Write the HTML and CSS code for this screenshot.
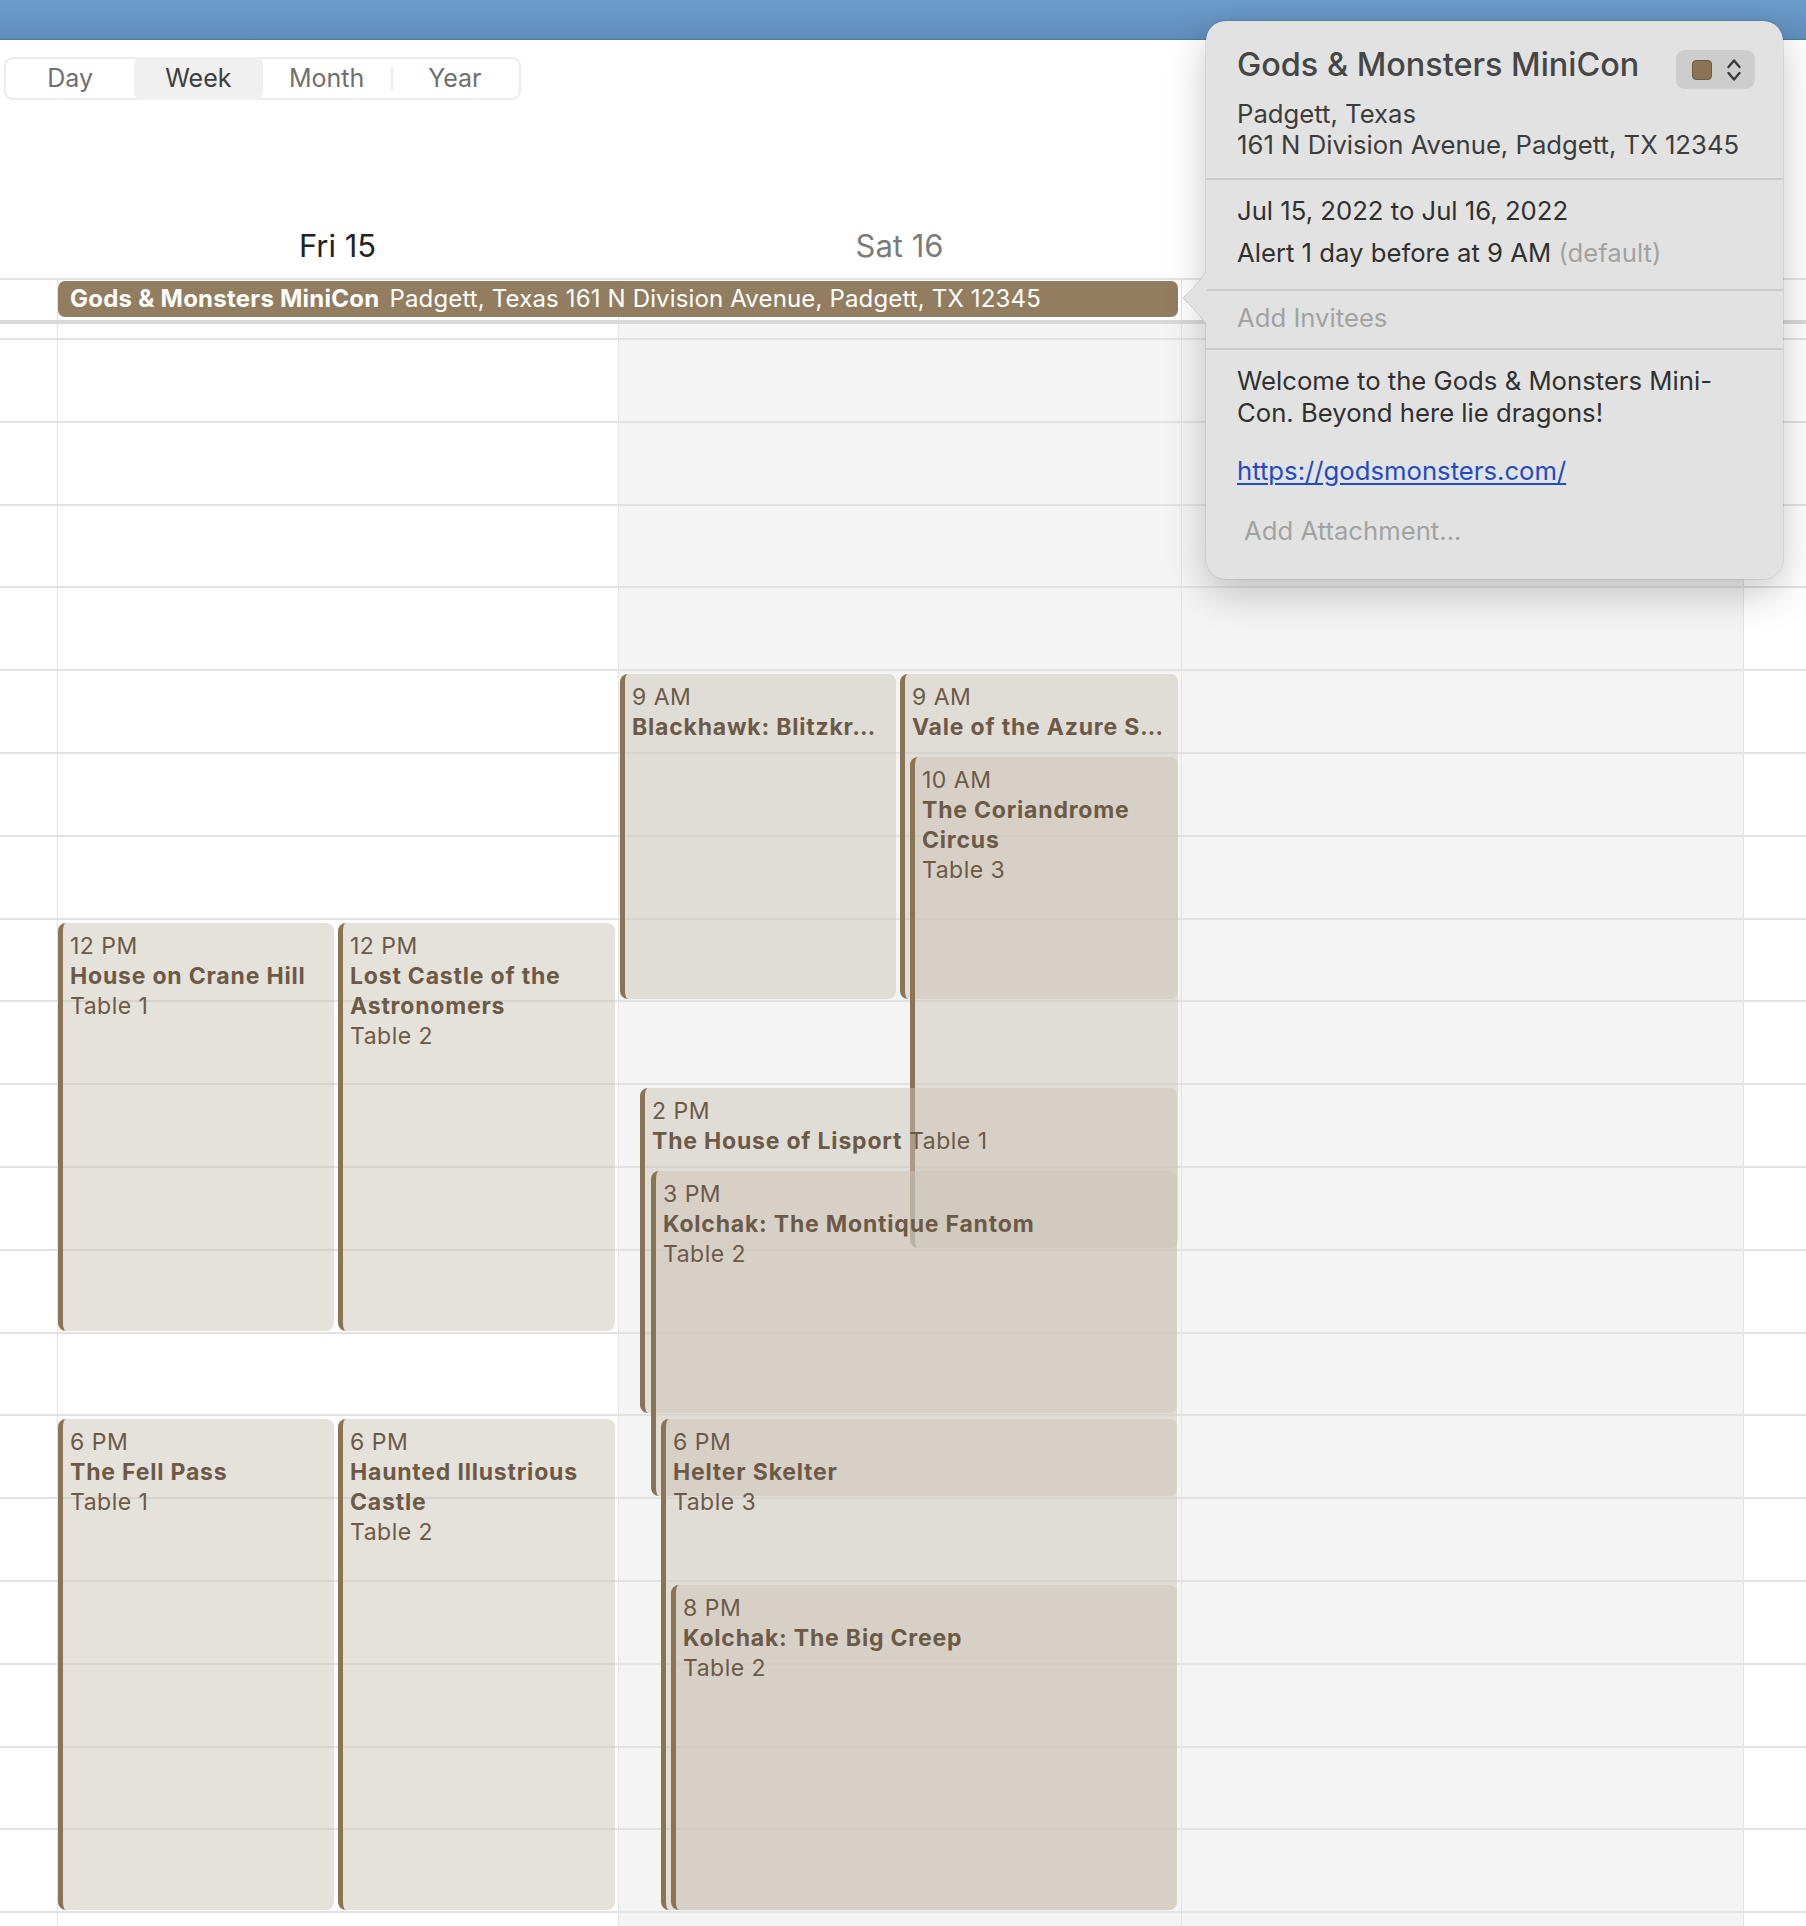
FILE: index.html
```html
<!DOCTYPE html>
<html>
<head>
<meta charset="utf-8">
<link rel="stylesheet" href="styles.css">
</head>
<body>
<div class="titlebar"></div>
<div class="toolbar">
  <div class="seg">
    <div class="seg-item">Day</div>
    <div class="seg-item active">Week</div>
    <div class="seg-item">Month</div>
    <div class="seg-item sep">Year</div>
  </div>
</div>
<div class="dayheads">
  <div></div>
  <div class="dh">Fri 15</div>
  <div class="dh dim">Sat 16</div>
  <div></div>
  <div></div>
</div>
<div class="allday">
  <div class="ad-cell ad-c1"></div>
  <div class="ad-cell ad-c2"></div>
  <div class="ad-cell ad-c3"></div>
  <div class="ad-cell ad-c4"></div>
  <div class="ad-cell ad-c5"></div>
  <div class="ad-event"><span class="ad-title">Gods &amp; Monsters MiniCon</span><span class="ad-loc">Padgett, Texas 161 N Division Avenue, Padgett, TX 12345</span></div>
</div>
<div class="divider"></div>
<div class="grid">
  <div class="gutter"></div>
  <div class="col">
    <div class="ev" style="top:598.6px;height:408px;left:0px;width:276px">
      <div>12 PM</div><div class="ev-title">House on Crane Hill</div><div>Table 1</div>
    </div>
    <div class="ev" style="top:598.6px;height:408px;left:280px;width:277px">
      <div>12 PM</div><div class="ev-title">Lost Castle of the<br>Astronomers</div><div>Table 2</div>
    </div>
    <div class="ev" style="top:1095.4px;height:491px;left:0px;width:276px">
      <div>6 PM</div><div class="ev-title">The Fell Pass</div><div>Table 1</div>
    </div>
    <div class="ev" style="top:1095.4px;height:491px;left:280px;width:277px">
      <div>6 PM</div><div class="ev-title">Haunted Illustrious<br>Castle</div><div>Table 2</div>
    </div>
  </div>
  <div class="col weekend">
    <div class="ev" style="top:350.2px;height:325px;left:1px;width:276px">
      <div>9 AM</div><div class="ev-title">Blackhawk: Blitzkr…</div>
    </div>
    <div class="ev" style="top:350.2px;height:325px;left:281px;width:278px">
      <div>9 AM</div><div class="ev-title">Vale of the Azure S…</div>
    </div>
    <div class="ev" style="top:433px;height:491px;left:291px;width:268px">
      <div>10 AM</div><div class="ev-title">The Coriandrome<br>Circus</div><div>Table 3</div>
    </div>
    <div class="ev" style="top:764.2px;height:325px;left:21px;width:537px">
      <div>2 PM</div><div><span class="ev-title">The House of Lisport</span> Table 1</div>
    </div>
    <div class="ev" style="top:847px;height:325px;left:32px;width:526px">
      <div>3 PM</div><div class="ev-title">Kolchak: The Montique Fantom</div><div>Table 2</div>
    </div>
    <div class="ev" style="top:1095.4px;height:491px;left:42px;width:516px">
      <div>6 PM</div><div class="ev-title">Helter Skelter</div><div>Table 3</div>
    </div>
    <div class="ev" style="top:1261px;height:325px;left:52px;width:506px">
      <div>8 PM</div><div class="ev-title">Kolchak: The Big Creep</div><div>Table 2</div>
    </div>
  </div>
  <div class="col weekend"></div>
  <div class="col"></div>
</div>

<div class="popover">
  <svg class="pop-arrow" width="25" height="56" viewBox="0 0 25 56">
    <path d="M25 0 C21 10 9 21 1 28 C9 35 21 46 25 56 Z" fill="#e2e2e2"/>
    <path d="M24 0 C20 10 8 21 1 28 C8 35 20 46 24 56" fill="none" stroke="#c9c9c9" stroke-width="1"/>
  </svg>
  <div class="pop-sec pop-head">
    <div class="pop-title-row">
      <div class="pop-title">Gods &amp; Monsters MiniCon</div>
      <div class="swatch-btn">
        <span class="swatch"></span>
        <svg class="chev" width="16" height="26" viewBox="0 0 16 26">
          <path d="M2.5 10 L8 3.5 L13.5 10" fill="none" stroke="#3a3a3a" stroke-width="2.4" stroke-linecap="round" stroke-linejoin="round"/>
          <path d="M2.5 16 L8 22.5 L13.5 16" fill="none" stroke="#3a3a3a" stroke-width="2.4" stroke-linecap="round" stroke-linejoin="round"/>
        </svg>
      </div>
    </div>
    <div class="pop-loc">Padgett, Texas<br>161 N Division Avenue, Padgett, TX 12345</div>
  </div>
  <div class="pop-sec pop-dates">
    <div class="pop-line">Jul 15, 2022 to Jul 16, 2022</div>
    <div class="pop-line">Alert 1 day before at 9 AM <span class="muted">(default)</span></div>
  </div>
  <div class="pop-sec pop-inv">
    <div class="pop-line muted">Add Invitees</div>
  </div>
  <div class="pop-sec pop-notes">
    <div class="pop-note">Welcome to the Gods &amp; Monsters Mini-<br>Con. Beyond here lie dragons!</div>
    <div class="pop-link-row"><a class="pop-link" href="#">https://godsmonsters.com/</a></div>
    <div class="pop-attach">Add Attachment...</div>
  </div>
</div>
</body>
</html>
```
FILE: styles.css
```css
* { box-sizing: border-box; }

body {
  margin: 0;
  width: 1806px;
  height: 1926px;
  overflow: hidden;
  background: #ffffff;
  font-family: Inter, "Noto Sans", "Liberation Sans", sans-serif;
  position: relative;
}

.titlebar {
  height: 40px;
  background: linear-gradient(#6b9dcd, #5f8dbb);
  border-bottom: 1px solid #50799f;
}

.toolbar {
  height: 60px;
  padding: 17px 0 0 4px;
}

.seg {
  display: flex;
  width: 517px;
  height: 43px;
  border: 2px solid #ececec;
  border-radius: 9px;
  background: #fff;
}

.seg-item {
  flex: 1;
  display: flex;
  align-items: center;
  justify-content: center;
  font-size: 25px;
  color: #6f6f6f;
  position: relative;
  padding-bottom: 1px;
}

.seg-item.active {
  background: #f0f0f0;
  color: #3e3e3e;
  border-radius: 8px;
  margin: -2px 0;
}

.seg-item.sep::before {
  content: "";
  position: absolute;
  left: 0;
  top: 8px;
  bottom: 8px;
  width: 2px;
  background: #ebebeb;
}

.dayheads {
  display: grid;
  grid-template-columns: 57px 561px 563px 562px 1fr;
  height: 178px;
  align-items: end;
  padding-bottom: 14px;
}

.dh {
  text-align: center;
  font-size: 31px;
  line-height: 36px;
  color: #222222;
}

.dh.dim { color: #7b7b7b; }

.allday {
  display: grid;
  grid-template-columns: 57px 561px 563px 562px 1fr;
  height: 42px;
  border-top: 2px solid #e4e4e4;
}

.ad-cell { grid-row: 1; border-left: 1px solid #e4e4e4; }
.ad-c1 { grid-column: 1; border-left: none; }
.ad-c2 { grid-column: 2; }
.ad-c3 { grid-column: 3; }
.ad-c4 { grid-column: 4; }
.ad-c5 { grid-column: 5; }

.ad-event {
  grid-row: 1;
  grid-column: 2 / 4;
  margin: 1px 3px 3px 1px;
  height: 36px;
  background: #937d61;
  border-radius: 7px;
  color: #ffffff;
  font-size: 24px;
  letter-spacing: 0.15px;
  line-height: 36px;
  padding-left: 12px;
  white-space: nowrap;
  overflow: hidden;
  z-index: 1;
}

.ad-title { font-weight: 700; margin-right: 10px; letter-spacing: 0.25px; }

.divider {
  height: 4px;
  background: #d9d9d9;
}

.grid {
  display: grid;
  grid-template-columns: 57px 561px 563px 562px 1fr;
  height: 1602px;
}

.gutter,
.col {
  background-image: repeating-linear-gradient(to bottom, #e2e2e2 0, #e2e2e2 2px, transparent 2px, transparent 82.8px);
  background-position: 0 14px;
}

.col {
  position: relative;
  border-left: 1px solid #e3e3e3;
}

.col.weekend { background-color: #f4f4f4; }

.ev {
  position: absolute;
  border-left: 5px solid #8b7355;
  border-radius: 8px;
  background: rgba(204, 196, 184, 0.5);
  padding: 8px 6px 0 7px;
  color: #6c5a47;
  font-size: 23px;
  letter-spacing: 0.5px;
  line-height: 30px;
  overflow: hidden;
  white-space: nowrap;
}

.ev-title { font-weight: 700; letter-spacing: 0.8px; }

.popover {
  position: absolute;
  left: 1206px;
  top: 21px;
  width: 577px;
  height: 558px;
  background: #e2e2e2;
  border-radius: 20px;
  box-shadow: 0 0 0 1px rgba(0, 0, 0, 0.08), 0 14px 40px rgba(0, 0, 0, 0.22);
  z-index: 10;
  color: #303030;
  font-size: 25.7px;
}

.pop-arrow {
  position: absolute;
  left: -24px;
  top: 249px;
}

.pop-sec {
  padding-left: 31px;
  padding-right: 24px;
}

.pop-sec + .pop-sec { border-top: 2px solid #cbcbcb; }

.pop-head { padding-top: 24px; padding-bottom: 18px; }

.pop-title-row {
  display: flex;
  justify-content: space-between;
  align-items: flex-start;
  padding-right: 4px;
}

.pop-title {
  font-size: 32.4px;
  line-height: 40px;
  font-weight: 500;
  color: #464646;
  white-space: nowrap;
}

.swatch-btn {
  margin-top: 5px;
  width: 79px;
  height: 39px;
  background: #cdcdcd;
  border-radius: 9px;
  display: flex;
  align-items: center;
  padding-left: 16px;
  gap: 14px;
}

.swatch {
  width: 20px;
  height: 20px;
  background: #8b7355;
  border: 1px solid #6d5a42;
  border-radius: 4px;
}

.pop-loc {
  margin-top: 9px;
  line-height: 31px;
  color: #3c3c3c;
  white-space: nowrap;
}

.pop-dates { padding-top: 10px; padding-bottom: 15px; }

.pop-line { line-height: 42px; white-space: nowrap; }

.muted { color: #a2a2a2; }

.pop-inv { padding-top: 6px; padding-bottom: 9px; }

.pop-notes { padding-top: 15px; }

.pop-note { line-height: 32px; white-space: nowrap; }

.pop-link-row { margin-top: 26px; line-height: 32px; }

.pop-link {
  color: #1f4cc4;
  text-decoration: underline;
  text-underline-offset: 3px;
}

.pop-attach {
  margin-top: 28px;
  line-height: 32px;
  padding-left: 7px;
  color: #a2a2a2;
}
```
